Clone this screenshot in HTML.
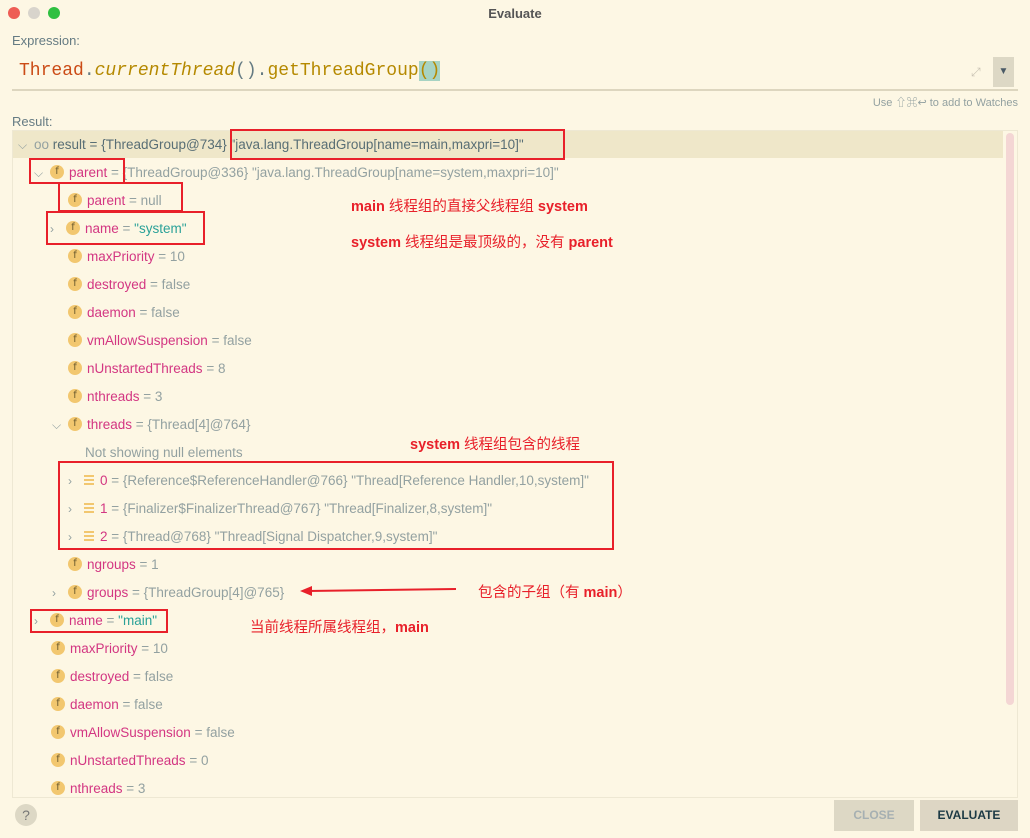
<!DOCTYPE html><html><head><meta charset="utf-8"><style>
*{margin:0;padding:0;box-sizing:border-box}
body{width:1030px;height:838px;background:#fdf7e4;font-family:"Liberation Sans","Noto Sans CJK SC",sans-serif;position:relative;overflow:hidden;font-size:13px;color:#586e75}
.a{position:absolute;white-space:nowrap}
.r{position:absolute;height:28px;line-height:28px;white-space:nowrap;color:#93a1a1;font-size:13.5px;margin-top:1px}
.k{color:#d33682}.s{color:#2aa198}.d{color:#586e75}
.ic{display:inline-block;width:14px;height:14px;border-radius:50%;background:#f2c76f;color:#6b5a2e;font-size:10px;line-height:14px;text-align:center;vertical-align:middle;margin-top:-3px;margin-right:5px;font-family:"DejaVu Sans",sans-serif}
.ar{display:inline-block;width:16px;color:#93a1a1;font-size:12px}
.box{position:absolute;border:2px solid #e8202a}
.red{position:absolute;color:#e8202a;font-size:14.5px;white-space:nowrap}
.red b{font-weight:bold}
.lst{display:inline-block;width:10px;height:10px;margin-right:6px;vertical-align:middle;margin-top:-3px;background:repeating-linear-gradient(#f2c76f 0 2px,transparent 2px 4px)}
</style></head><body>
<div class="a" style="left:8px;top:7px;width:12px;height:12px;border-radius:50%;background:#ee5d55"></div>
<div class="a" style="left:28px;top:7px;width:12px;height:12px;border-radius:50%;background:#d8d4cc"></div>
<div class="a" style="left:48px;top:7px;width:12px;height:12px;border-radius:50%;background:#2fc040"></div>
<div class="a" style="left:0;width:1030px;top:6px;text-align:center;font-weight:bold;color:#555;font-size:13px">Evaluate</div>
<div class="a" style="left:12px;top:33px;color:#657b83">Expression:</div>
<div class="a" style="left:19px;top:61px;font-family:'Liberation Mono',monospace;font-size:18px;color:#b58900"><span style="color:#cb4b16">Thread</span><span style="color:#657b83">.</span><i>currentThread</i><span style="color:#657b83">().</span>getThreadGroup<span style="background:#a7d3c3">()</span></div>
<div class="a" style="left:12px;top:89px;width:1006px;height:2px;background:#ddd6bf"></div>
<div class="a" style="left:971px;top:65px;color:#c9c3b3;font-size:12px">⤢</div>
<div class="a" style="left:993px;top:57px;width:21px;height:30px;background:#ddd8c5;color:#4a5a66;text-align:center;line-height:30px;font-size:10px">▼</div>
<div class="a" style="right:12px;top:94px;font-size:11px;color:#93a1a1">Use ⇧⌘↩ to add to Watches</div>
<div class="a" style="left:12px;top:114px;color:#657b83">Result:</div>
<div class="a" style="left:12px;top:130px;width:1006px;height:668px;border:1px solid #eee8d3"></div>
<div class="a" style="left:13px;top:131px;width:990px;height:27px;background:#efe7c9"></div>
<div class="a" style="left:1006px;top:133px;width:8px;height:572px;border-radius:4px;background:#f4d6d4"></div>

<div class="r" style="left:18px;top:130px"><span class="ar">⌵</span><span style="color:#93a1a1">oo</span> <span class="d">result = {ThreadGroup@734} "java.lang.ThreadGroup[name=main,maxpri=10]"</span></div>
<div class="r" style="left:34px;top:158px"><span class="ar">⌵</span><span class="ic">f</span><span class="k">parent</span> = {ThreadGroup@336} "java.lang.ThreadGroup[name=system,maxpri=10]"</div>
<div class="r" style="left:68px;top:186px"><span class="ic">f</span><span class="k">parent</span> = null</div>
<div class="r" style="left:50px;top:214px"><span class="ar">›</span><span class="ic">f</span><span class="k">name</span> = <span class="s">"system"</span></div>
<div class="r" style="left:68px;top:242px"><span class="ic">f</span><span class="k">maxPriority</span> = 10</div>
<div class="r" style="left:68px;top:270px"><span class="ic">f</span><span class="k">destroyed</span> = false</div>
<div class="r" style="left:68px;top:298px"><span class="ic">f</span><span class="k">daemon</span> = false</div>
<div class="r" style="left:68px;top:326px"><span class="ic">f</span><span class="k">vmAllowSuspension</span> = false</div>
<div class="r" style="left:68px;top:354px"><span class="ic">f</span><span class="k">nUnstartedThreads</span> = 8</div>
<div class="r" style="left:68px;top:382px"><span class="ic">f</span><span class="k">nthreads</span> = 3</div>
<div class="r" style="left:52px;top:410px"><span class="ar">⌵</span><span class="ic">f</span><span class="k">threads</span> = {Thread[4]@764}</div>
<div class="r" style="left:85px;top:438px">Not showing null elements</div>
<div class="r" style="left:68px;top:466px"><span class="ar">›</span><span class="lst"></span><span class="k">0</span> = {Reference$ReferenceHandler@766} "Thread[Reference Handler,10,system]"</div>
<div class="r" style="left:68px;top:494px"><span class="ar">›</span><span class="lst"></span><span class="k">1</span> = {Finalizer$FinalizerThread@767} "Thread[Finalizer,8,system]"</div>
<div class="r" style="left:68px;top:522px"><span class="ar">›</span><span class="lst"></span><span class="k">2</span> = {Thread@768} "Thread[Signal Dispatcher,9,system]"</div>
<div class="r" style="left:68px;top:550px"><span class="ic">f</span><span class="k">ngroups</span> = 1</div>
<div class="r" style="left:52px;top:578px"><span class="ar">›</span><span class="ic">f</span><span class="k">groups</span> = {ThreadGroup[4]@765}</div>
<div class="r" style="left:34px;top:606px"><span class="ar">›</span><span class="ic">f</span><span class="k">name</span> = <span class="s">"main"</span></div>
<div class="r" style="left:51px;top:634px"><span class="ic">f</span><span class="k">maxPriority</span> = 10</div>
<div class="r" style="left:51px;top:662px"><span class="ic">f</span><span class="k">destroyed</span> = false</div>
<div class="r" style="left:51px;top:690px"><span class="ic">f</span><span class="k">daemon</span> = false</div>
<div class="r" style="left:51px;top:718px"><span class="ic">f</span><span class="k">vmAllowSuspension</span> = false</div>
<div class="r" style="left:51px;top:746px"><span class="ic">f</span><span class="k">nUnstartedThreads</span> = 0</div>
<div class="r" style="left:51px;top:774px;height:22px;overflow:hidden"><span class="ic">f</span><span class="k">nthreads</span> = 3</div>

<div class="box" style="left:230px;top:129px;width:335px;height:31px"></div>
<div class="box" style="left:29px;top:158px;width:96px;height:26px"></div>
<div class="box" style="left:58px;top:182px;width:125px;height:30px"></div>
<div class="box" style="left:46px;top:211px;width:159px;height:34px"></div>
<div class="box" style="left:58px;top:461px;width:556px;height:89px"></div>
<div class="box" style="left:30px;top:609px;width:138px;height:24px"></div>
<div class="red" style="left:351px;top:195px"><b>main</b> 线程组的直接父线程组 <b>system</b></div>
<div class="red" style="left:351px;top:231px"><b>system</b> 线程组是最顶级的，没有 <b>parent</b></div>
<div class="red" style="left:410px;top:433px"><b>system</b> 线程组包含的线程</div>
<div class="red" style="left:478px;top:581px">包含的子组（有 <b>main</b>）</div>
<div class="red" style="left:250px;top:616px">当前线程所属线程组，<b>main</b></div>
<svg class="a" style="left:298px;top:584px" width="160" height="14"><line x1="158" y1="5" x2="10" y2="7" stroke="#e8202a" stroke-width="2"/><polygon points="2,7 14,2 14,12" fill="#e8202a"/></svg>

<div class="a" style="left:15px;top:804px;width:22px;height:22px;border-radius:50%;background:#ddd8c5;text-align:center;line-height:22px;color:#777;font-size:14px">?</div>
<div class="a" style="left:834px;top:800px;width:80px;height:31px;background:#ddd8c5;color:#a6b0b2;font-weight:bold;font-size:12px;text-align:center;line-height:31px">CLOSE</div>
<div class="a" style="left:920px;top:800px;width:98px;height:31px;background:#ddd6c4;color:#1c3a45;font-weight:bold;font-size:12px;text-align:center;line-height:31px">EVALUATE</div>
</body></html>
